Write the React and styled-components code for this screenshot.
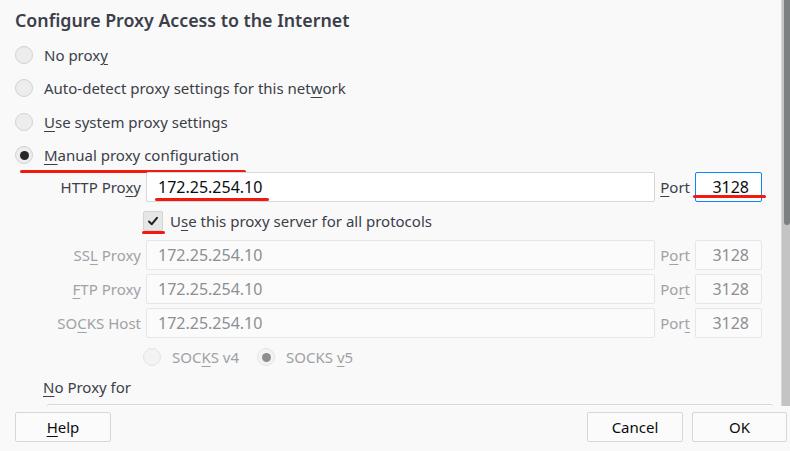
import React from "react";
import styled, { createGlobalStyle, css } from "styled-components";

const GlobalStyle = createGlobalStyle`
  html, body {
    margin: 0;
    padding: 0;
    background: #f9f9fa;
  }
  body {
    font-family: "Noto Sans", "Open Sans", sans-serif;
    font-size: 15px;
    color: #3b4048;
  }
`;

const Window = styled.div`
  width: 790px;
  height: 451px;
  display: flex;
  flex-direction: column;
  overflow: hidden;
  background: #f9f9fa;
`;

const Main = styled.div`
  height: 406px;
  display: flex;
  overflow: hidden;
`;

const Content = styled.div`
  flex: 1;
  padding: 8px 0 0 15px;
  overflow: hidden;
`;

const Title = styled.h1`
  margin: 0 0 6px;
  font-size: 17.8px;
  font-weight: 600;
  line-height: 24px;
  color: #3b4048;
`;

const Key = styled.span`
  text-decoration: underline;
  text-underline-offset: 3px;
  text-decoration-thickness: 1px;
`;

// red pen marks drawn over the screenshot
const RedLine = styled.span`
  position: absolute;
  left: ${(p) => p.$left}px;
  width: ${(p) => p.$width}px;
  bottom: ${(p) => p.$bottom}px;
  height: 3px;
  border-radius: 2px;
  background: #f2190f;
  pointer-events: none;
`;

const RadioRow = styled.div`
  height: 33.5px;
  display: flex;
  align-items: center;
`;

const RadioLabel = styled.label`
  position: relative;
  display: inline-flex;
  align-items: center;
  gap: 11px;
  color: ${(p) => (p.$disabled ? "#9fa1a4" : "#3b4048")};
`;

const RadioDot = styled.span`
  width: 18px;
  height: 18px;
  box-sizing: border-box;
  border-radius: 50%;
  border: 1px solid ${(p) => (p.$disabled ? "#e4e4e4" : "#d2d2d2")};
  background: ${(p) => (p.$disabled ? "#f3f3f3" : "#ededed")};
  display: flex;
  align-items: center;
  justify-content: center;
  ${(p) =>
    p.$checked &&
    css`
      &::after {
        content: "";
        width: 9px;
        height: 9px;
        border-radius: 50%;
        background: ${p.$disabled ? "#8e8e8e" : "#25272b"};
      }
    `}
`;

const ProxyGrid = styled.div`
  margin: 0 19px 0 28px;
  display: grid;
  grid-template-columns: 98px 1fr auto 67px;
  grid-auto-rows: 30px;
  column-gap: 5px;
  row-gap: 4px;
  align-items: center;
`;

const FieldLabel = styled.span`
  text-align: right;
  white-space: nowrap;
  color: ${(p) => (p.$disabled ? "#a0a2a5" : "#3b4048")};
`;

const Field = styled.div`
  position: relative;
  height: 30px;
  box-sizing: border-box;
  display: flex;
  align-items: center;
  justify-content: ${(p) => (p.$right ? "flex-end" : "flex-start")};
  padding: 0 11px;
  border-radius: 2px;
  border: 1px solid ${(p) => (p.$focused ? "#0a84ff" : p.$disabled ? "#e6e6e7" : "#d7d7db")};
  background: ${(p) => (p.$disabled ? "#fbfbfb" : "#ffffff")};
  color: ${(p) => (p.$disabled ? "#8d8f92" : "#0c0c0d")};
  font-size: 16px;
  ${(p) => p.$right && css`padding-right: 12px;`}
`;

const SpanRow = styled.div`
  grid-column: 2 / 5;
  display: flex;
  align-items: center;
  gap: 18px;
  margin-left: -3px;
`;

const CheckLabel = styled.label`
  display: inline-flex;
  align-items: center;
  gap: 7px;
  color: #3b4048;
`;

const CheckBox = styled.span`
  position: relative;
  width: 20px;
  height: 20px;
  box-sizing: border-box;
  border-radius: 2px;
  border: 1px solid #d4d4d4;
  background: #e6e6e6;
  display: flex;
  align-items: center;
  justify-content: center;
`;

const NoProxyLabel = styled.div`
  margin: 5px 0 0 28px;
  line-height: 20px;
`;

const TextArea = styled.div`
  margin: 7px 8px 0 32px;
  height: 60px;
  border: 1px solid #d7d7db;
  border-radius: 2px;
  background: #fff;
`;

const ScrollTrack = styled.div`
  width: 9px;
  height: 406px;
  background: #c4c4c4;
  border-left: 1px solid #d6d6d6;
  box-sizing: border-box;
  display: flex;
  justify-content: flex-end;
`;

const ScrollThumb = styled.div`
  width: 6px;
  height: 225px;
  background: #7c8080;
  border-radius: 0 0 3px 3px;
`;

const Footer = styled.div`
  flex: 1;
  display: flex;
  align-items: flex-start;
  padding: 6px 3px 0 15px;
  gap: 9px;
`;

const Button = styled.button`
  width: ${(p) => p.$w || 96}px;
  height: 30px;
  box-sizing: border-box;
  border: 1px solid #d7d7db;
  border-radius: 2px;
  background: #fbfbfb;
  color: #0c0c0d;
  font-family: inherit;
  font-size: 15px;
  padding: 0;
  ${(p) => p.$push && css`margin-left: auto;`}
`;

const Check = () => (
  <svg width="12" height="12" viewBox="0 0 12 12">
    <path d="M2 6.5 L4.8 9.2 L10 2.8" fill="none" stroke="#1f2125" strokeWidth="2" strokeLinecap="round" strokeLinejoin="round" />
  </svg>
);

const radios = [
  { key: "none", label: <>No prox<Key>y</Key></> },
  { key: "auto", label: <>Auto-detect proxy settings for this net<Key>w</Key>ork</> },
  { key: "system", label: <><Key>U</Key>se system proxy settings</> },
];

const others = [
  { label: <>SS<Key>L</Key> Proxy</>, port: <>P<Key>o</Key>rt</> },
  { label: <><Key>F</Key>TP Proxy</>, port: <>Po<Key>r</Key>t</> },
  { label: <>SO<Key>C</Key>KS Host</>, port: <>Por<Key>t</Key></> },
];

export default function App() {
  return (
    <Window>
      <GlobalStyle />
      <Main>
        <Content>
          <Title>Configure Proxy Access to the Internet</Title>
          {radios.map((r) => (
            <RadioRow key={r.key}>
              <RadioLabel>
                <RadioDot />
                <span>{r.label}</span>
              </RadioLabel>
            </RadioRow>
          ))}
          <RadioRow>
            <RadioLabel>
              <RadioDot $checked />
              <span><Key>M</Key>anual proxy configuration</span>
              <RedLine $left={5} $width={226} $bottom={-8} />
            </RadioLabel>
          </RadioRow>

          <ProxyGrid>
            <FieldLabel>HTTP Pro<Key>x</Key>y</FieldLabel>
            <Field>
              172.25.254.10
              <RedLine $left={8} $width={114} $bottom={0} />
            </Field>
            <FieldLabel><Key>P</Key>ort</FieldLabel>
            <Field $right $focused>
              3128
              <RedLine $left={-3} $width={73} $bottom={3} />
            </Field>

            <SpanRow>
              <CheckLabel>
                <CheckBox>
                  <Check />
                  <RedLine $left={-2} $width={23} $bottom={-4} />
                </CheckBox>
                <span>U<Key>s</Key>e this proxy server for all protocols</span>
              </CheckLabel>
            </SpanRow>

            {others.map((o, i) => (
              <React.Fragment key={i}>
                <FieldLabel $disabled>{o.label}</FieldLabel>
                <Field $disabled>172.25.254.10</Field>
                <FieldLabel $disabled>{o.port}</FieldLabel>
                <Field $disabled $right>3128</Field>
              </React.Fragment>
            ))}

            <SpanRow>
              <RadioLabel $disabled>
                <RadioDot $disabled />
                <span>SOC<Key>K</Key>S v4</span>
              </RadioLabel>
              <RadioLabel $disabled>
                <RadioDot $disabled $checked />
                <span>SOCKS <Key>v</Key>5</span>
              </RadioLabel>
            </SpanRow>
          </ProxyGrid>

          <NoProxyLabel><Key>N</Key>o Proxy for</NoProxyLabel>
          <TextArea />
        </Content>
        <ScrollTrack>
          <ScrollThumb />
        </ScrollTrack>
      </Main>
      <Footer>
        <Button><Key>H</Key>elp</Button>
        <Button $push>Cancel</Button>
        <Button $w={95}>OK</Button>
      </Footer>
    </Window>
  );
}
